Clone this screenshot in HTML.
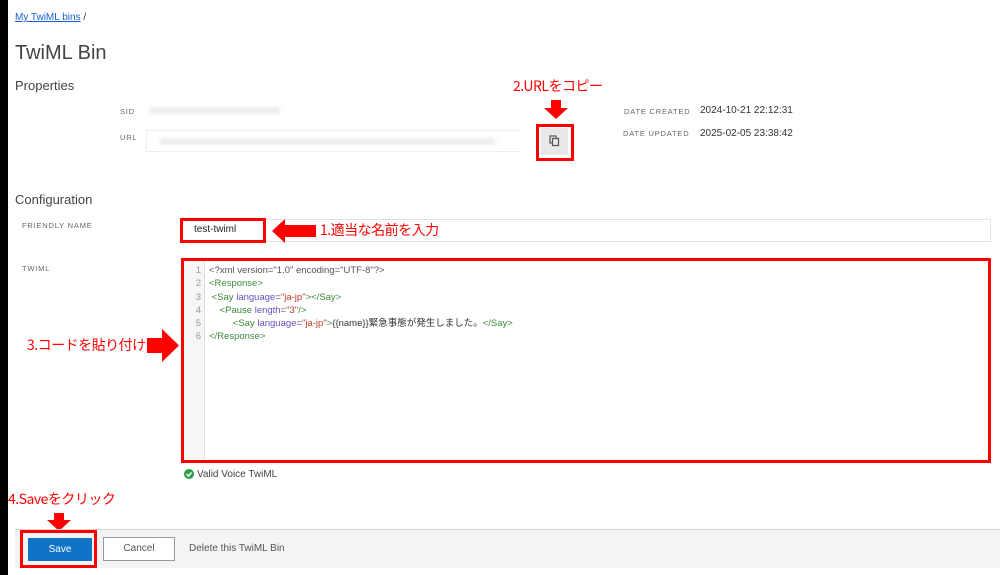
<!DOCTYPE html>
<html><head><meta charset="utf-8"><style>
*{margin:0;padding:0;box-sizing:border-box}
body{width:1000px;height:575px;background:#fff;position:relative;overflow:hidden;font-family:"Liberation Sans","Noto Sans CJK JP",sans-serif;color:#333}
.a{position:absolute;white-space:nowrap}
.lbl{font-size:7.5px;letter-spacing:.8px;color:#666}
.red{color:#f00;font-family:"Noto Sans CJK JP","Liberation Sans",sans-serif;font-size:14px;letter-spacing:-0.5px}
.rb{position:absolute;border:3px solid #f00}
.blur{position:absolute;background:#e6e6e6;filter:blur(2px);height:5px}
.code{position:absolute;left:209px;font-family:"Liberation Sans","Noto Sans CJK JP",sans-serif;font-size:9.5px;color:#555;line-height:13.3px;white-space:pre}
.g{color:#3b8a3b}.p{color:#6a4fc0}.s{color:#c0392b}
.ln{position:absolute;left:184px;width:20px;text-align:right;padding-right:3px;font-size:9.5px;color:#999;line-height:13.3px}
</style></head><body>
<div class="a" style="left:0;top:0;width:8px;height:575px;background:#000"></div>
<div class="a" style="left:15px;top:12px;font-size:10px;color:#1a5fd6"><span style="text-decoration:underline">My TwiML bins</span> <span style="color:#333">/</span></div>
<div class="a" style="left:15px;top:42px;font-size:20px;color:#444">TwiML Bin</div>
<div class="a" style="left:15px;top:78px;font-size:13px;color:#444">Properties</div>
<div class="a lbl" style="left:120px;top:107px">SID</div>
<div class="blur" style="left:150px;top:108px;width:130px"></div>
<div class="a lbl" style="left:120px;top:133px">URL</div>
<div class="a" style="left:146px;top:130px;width:374px;height:22px;border:1px solid #eee;border-right:none"></div>
<div class="blur" style="left:160px;top:139px;width:335px"></div>
<div class="a" style="left:541px;top:128px;width:27px;height:27px;background:#e8e8e8"></div>
<svg class="a" style="left:549px;top:135px" width="11" height="12" viewBox="0 0 11 12"><rect x="1" y="1" width="6" height="7" fill="none" stroke="#555" stroke-width="1.2"/><rect x="3.5" y="3.5" width="6" height="7" fill="#e8e8e8" stroke="#555" stroke-width="1.2"/></svg>
<div class="rb" style="left:536px;top:124px;width:38px;height:37px"></div>
<div class="a red" style="left:513px;top:76px">2.URLをコピー</div>
<svg class="a" style="left:544px;top:100px" width="24" height="19"><path d="M7 0h10v8h7L12 19 0 8h7z" fill="#f00"/></svg>
<div class="a lbl" style="left:624px;top:107px">DATE CREATED</div>
<div class="a" style="left:700px;top:105px;font-size:10px">2024-10-21 22:12:31</div>
<div class="a lbl" style="left:623px;top:129px">DATE UPDATED</div>
<div class="a" style="left:700px;top:128px;font-size:10px">2025-02-05 23:38:42</div>
<div class="a" style="left:15px;top:192px;font-size:13px;color:#444">Configuration</div>
<div class="a lbl" style="left:22px;top:221px">FRIENDLY NAME</div>
<div class="a" style="left:180px;top:219px;width:811px;height:23px;border:1px solid #e3e3e3"></div>
<div class="a" style="left:194px;top:224px;font-size:10px;color:#222">test-twiml</div>
<div class="rb" style="left:180px;top:218px;width:86px;height:25px"></div>
<svg class="a" style="left:272px;top:219px" width="44" height="24"><path d="M0 12L13 0v6h31v12H13v6z" fill="#f00"/></svg>
<div class="a red" style="left:320px;top:220px">1.適当な名前を入力</div>
<div class="a lbl" style="left:22px;top:264px">TWIML</div>
<div class="a" style="left:184px;top:261px;width:21px;height:198px;background:#f6f6f6;border-right:1px solid #ddd"></div>
<div class="ln" style="top:264px">1<br>2<br>3<br>4<br>5<br>6</div>
<div class="code" style="top:264px">&lt;?xml version="1.0" encoding="UTF-8"?&gt;
<span class="g">&lt;Response&gt;</span>
 <span class="g">&lt;Say</span> <span class="p">language</span>=<span class="s">"ja-jp"</span><span class="g">&gt;&lt;/Say&gt;</span>
    <span class="g">&lt;Pause</span> <span class="p">length</span>=<span class="s">"3"</span><span class="g">/&gt;</span>
         <span class="g">&lt;Say</span> <span class="p">language</span>=<span class="s">"ja-jp"</span><span class="g">&gt;</span><span style="color:#333">{{name}}緊急事態が発生しました。</span><span class="g">&lt;/Say&gt;</span>
<span class="g">&lt;/Response&gt;</span></div>
<div class="rb" style="left:181px;top:258px;width:810px;height:205px"></div>
<div class="a red" style="left:27px;top:335px">3.コードを貼り付け</div>
<svg class="a" style="left:147px;top:329px" width="32" height="33"><path d="M0 9h15V0l17 16.5L15 33v-9H0z" fill="#f00"/></svg>
<svg class="a" style="left:184px;top:469px" width="10" height="10"><circle cx="5" cy="5" r="5" fill="#2e9e48"/><path d="M2.5 5l2 2 3-3.5" stroke="#fff" stroke-width="1.5" fill="none"/></svg>
<div class="a" style="left:197px;top:469px;font-size:10px;color:#444">Valid Voice TwiML</div>
<div class="a red" style="left:8px;top:489px">4.Saveをクリック</div>
<svg class="a" style="left:47px;top:513px" width="24" height="18"><path d="M7 0h10v7h7L12 18 0 7h7z" fill="#f00"/></svg>
<div class="a" style="left:15px;top:529px;width:985px;height:39px;background:#f4f4f4;border-top:1px solid #d5d5d5"></div>
<div class="a" style="left:28px;top:538px;width:64px;height:23px;background:#0f73c6;color:#fff;font-size:10px;text-align:center;line-height:23px">Save</div>
<div class="rb" style="left:20px;top:530px;width:77px;height:38px"></div>
<div class="a" style="left:103px;top:537px;width:72px;height:24px;border:1px solid #999;background:#fff;color:#555;font-size:10px;text-align:center;line-height:22px">Cancel</div>
<div class="a" style="left:189px;top:543px;font-size:10px;color:#555">Delete this TwiML Bin</div>
</body></html>
